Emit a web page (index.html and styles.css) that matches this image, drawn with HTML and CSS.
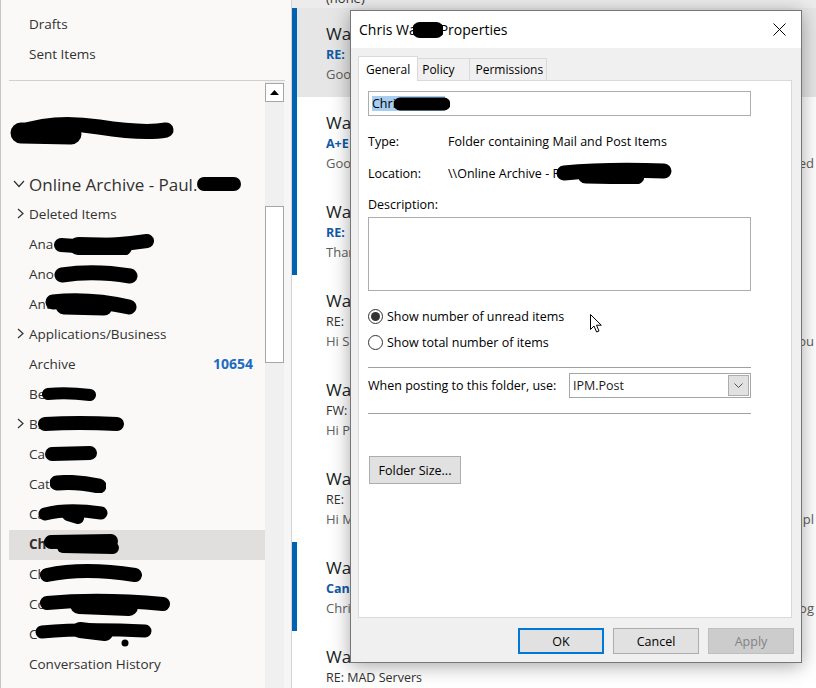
FILE: index.html
```html
<!DOCTYPE html>
<html lang="en">
<head>
  <meta charset="UTF-8" />
  <title>Chris W Properties</title>
  <link rel="stylesheet" href="styles.css">
</head>
<body>
  <div class="app">
    <nav class="folders">
      <div class="favorites">
        <div class="folder">Drafts</div>
        <div class="folder">Sent Items</div>
      </div>
      <div class="tree">
        <div class="tree-list">
          <div class="account-row">
            <svg class="blot" width="168" height="34"><path d="M12 21 Q 45 9 90 16 T 157 19" stroke-width="15"/><path d="M12 22 L 62 23" stroke-width="21"/></svg>
          </div>
          <div class="group-row">
            <svg class="chevron-down" width="12" height="8" viewBox="0 0 12 8"><path d="M1 1 L6 6.5 L11 1"/></svg>
            Online Archive - Paul.<svg class="blot blot-gap" width="44" height="16"><path d="M7 8 L37 8" stroke-width="14"/></svg>
          </div>
          <div class="folder"><span class="twisty"><svg width="7" height="11" viewBox="0 0 7 11"><path d="M1 1 L6 5.5 L1 10"/></svg></span>Deleted Items</div>
          <div class="folder"><span class="twisty"></span>Ana<svg class="blot blot-gap" width="102" height="22"><path d="M8 12 Q 45 15 94 8" stroke-width="14"/><path d="M25 13 L70 14" stroke-width="18"/></svg></div>
          <div class="folder"><span class="twisty"></span>Ano<svg class="blot blot-gap" width="84" height="20"><path d="M8 11 Q 40 6 76 12" stroke-width="15"/></svg></div>
          <div class="folder"><span class="twisty"></span>Ant<svg class="blot blot-tuck" width="94" height="24"><path d="M9 10 Q 45 6 85 15" stroke-width="15"/><path d="M20 14 L60 15" stroke-width="17"/></svg></div>
          <div class="folder"><span class="twisty"><svg width="7" height="11" viewBox="0 0 7 11"><path d="M1 1 L6 5.5 L1 10"/></svg></span>Applications/Business</div>
          <div class="folder"><span class="twisty"></span>Archive<span class="count">10654</span></div>
          <div class="folder"><span class="twisty"></span>Be<svg class="blot" width="54" height="16"><path d="M6 8 Q 25 6 48 9" stroke-width="12"/></svg></div>
          <div class="folder"><span class="twisty"><svg width="7" height="11" viewBox="0 0 7 11"><path d="M1 1 L6 5.5 L1 10"/></svg></span>BS<svg class="blot blot-tuck" width="86" height="18"><path d="M7 9 Q 40 7 79 9" stroke-width="14"/></svg></div>
          <div class="folder"><span class="twisty"></span>Ca<svg class="blot blot-gap" width="52" height="17"><path d="M7 9 L45 8" stroke-width="14"/></svg></div>
          <div class="folder"><span class="twisty"></span>Cat<svg class="blot blot-gap" width="56" height="18"><path d="M7 8 Q 26 6 49 11" stroke-width="15"/></svg></div>
          <div class="folder"><span class="twisty"></span>Ca<svg class="blot blot-tuck" width="70" height="20"><path d="M7 10 Q 30 4 63 9" stroke-width="13"/><path d="M30 11 L40 14" stroke-width="12"/></svg></div>
          <div class="folder selected"><span class="twisty"></span>Ch<svg class="blot" width="78" height="24"><path d="M8 10 L68 9" stroke-width="14"/><path d="M20 15 L70 16" stroke-width="12"/></svg></div>
          <div class="folder"><span class="twisty"></span>Ch<svg class="blot blot-tuck" width="104" height="20"><path d="M8 11 Q 45 3 96 11" stroke-width="14"/></svg></div>
          <div class="folder"><span class="twisty"></span>Co<svg class="blot blot-tuck" width="132" height="24"><path d="M8 11 Q 60 6 124 12" stroke-width="14"/><path d="M40 13 L90 15" stroke-width="18"/></svg></div>
          <div class="folder"><span class="twisty"></span>C<svg class="blot" width="118" height="26"><path d="M7 11 Q 50 7 110 10" stroke-width="13"/><path d="M45 9 L70 12" stroke-width="16"/><circle cx="90" cy="22" r="3.5"/></svg></div>
          <div class="folder"><span class="twisty"></span>Conversation History</div>
        </div>
        <div class="scrollbar">
          <div class="scroll-up"><svg width="9" height="5" viewBox="0 0 9 5"><path d="M0 5 L4.5 0 L9 5 Z"/></svg></div>
          <div class="scroll-thumb"></div>
        </div>
        <div class="gutter"></div>
      </div>
    </nav>

    <section class="mail-list">
      <div class="mail-none"><span>(none)</span></div>
      <div class="mail-item unread selected">
        <div class="mail-from">Wa</div>
        <div class="mail-subject">RE:</div>
        <div class="mail-preview"><span class="preview-text">Goo</span></div>
      </div>
      <div class="mail-item unread">
        <div class="mail-from">Wa</div>
        <div class="mail-subject">A+E</div>
        <div class="mail-preview"><span class="preview-text">Goo</span><span class="tail">ed</span></div>
      </div>
      <div class="mail-item unread">
        <div class="mail-from">Wa</div>
        <div class="mail-subject">RE:</div>
        <div class="mail-preview"><span class="preview-text">Thar</span></div>
      </div>
      <div class="mail-item">
        <div class="mail-from">Wa</div>
        <div class="mail-subject">RE:</div>
        <div class="mail-preview"><span class="preview-text">Hi S</span><span class="tail">ou</span></div>
      </div>
      <div class="mail-item">
        <div class="mail-from">Wa</div>
        <div class="mail-subject">FW:</div>
        <div class="mail-preview"><span class="preview-text">Hi P</span></div>
      </div>
      <div class="mail-item">
        <div class="mail-from">Wa</div>
        <div class="mail-subject">RE:</div>
        <div class="mail-preview"><span class="preview-text">Hi M</span><span class="tail">pl</span></div>
      </div>
      <div class="mail-item unread">
        <div class="mail-from">Wa</div>
        <div class="mail-subject">Can</div>
        <div class="mail-preview"><span class="preview-text">Chri</span><span class="tail">og</span></div>
      </div>
      <div class="mail-item">
        <div class="mail-from">Wa</div>
        <div class="mail-subject">RE: MAD Servers</div>
      </div>
    </section>
  </div>

  <div class="dialog">
    <div class="dialog-title">
      <span>Chris Wa<svg class="blot blot-title" width="30" height="20"><path d="M7 10 L23 10" stroke-width="16"/></svg>Properties</span>
      <svg class="close" width="13" height="13" viewBox="0 0 13 13"><path d="M0.5 0.5 L12.5 12.5 M12.5 0.5 L0.5 12.5"/></svg>
    </div>
    <div class="dialog-body">
      <div class="tabs">
        <div class="tab active">General</div>
        <div class="tab tab-policy">Policy</div>
        <div class="tab tab-perm">Permissions</div>
      </div>
      <div class="tab-panel">
        <div class="name-field"><span class="highlight">Chri<svg class="blot blot-name" width="56" height="18"><path d="M6 9 L50 9" stroke-width="13"/></svg></span></div>
        <div class="prop-row"><span class="prop-label">Type:</span><span>Folder containing Mail and Post Items</span></div>
        <div class="prop-row"><span class="prop-label">Location:</span><span>\\Online Archive - P<svg class="blot blot-loc" width="116" height="22"><path d="M8 11 Q 50 7 108 9" stroke-width="15"/><path d="M30 13 L80 14" stroke-width="17"/></svg></span></div>
        <div class="desc-label">Description:</div>
        <div class="desc-box"></div>
        <div class="radio first"><span class="radio-dot checked"></span>Show number of unread items</div>
        <div class="radio"><span class="radio-dot"></span>Show total number of items</div>
        <div class="sep"></div>
        <div class="post-row">
          <span>When posting to this folder, use:</span>
          <div class="select">
            <span>IPM.Post</span>
            <span class="select-btn"><svg width="9" height="5" viewBox="0 0 9 5"><path d="M0.5 0.5 L4.5 4.5 L8.5 0.5"/></svg></span>
          </div>
        </div>
        <div class="sep sep-lower"></div>
        <button class="btn folder-size">Folder Size...</button>
      </div>
      <div class="dialog-buttons">
        <button class="btn btn-default">OK</button>
        <button class="btn">Cancel</button>
        <button class="btn" disabled>Apply</button>
      </div>
    </div>
  </div>

  <svg class="cursor" width="13" height="20" viewBox="0 0 13 20"><path d="M0.5 0.5 L0.5 15.5 L4 12 L6.6 18 L9 17 L6.5 11.2 L11.3 11.2 Z"/></svg>
</body>
</html>
```

FILE: styles.css
```css
* {
  box-sizing: border-box;
}
html, body {
  margin: 0;
  padding: 0;
  height: 100%;
  overflow: hidden;
}
body {
  position: relative;
  background: #fff;
  font-family: "Open Sans", "Noto Sans", sans-serif;
  color: #323130;
}
.app {
  display: flex;
  height: 688px;
}

/* folder pane */
.folders {
  flex: none;
  width: 292px;
  display: flex;
  flex-direction: column;
  background: #faf9f8;
  border-left: 1px solid #c8c6c4;
  border-right: 1px solid #d6d4d2;
  font-size: 13.5px;
}
.favorites {
  height: 81px;
  margin: 0 6px 0 8px;
  padding-top: 10px;
  border-bottom: 1px solid #d2d0ce;
}
.folder {
  display: flex;
  align-items: center;
  height: 30px;
  padding-left: 20px;
  padding-bottom: 3px;
  white-space: nowrap;
}
.tree .folder {
  padding-left: 8px;
  padding-right: 12px;
}
.twisty {
  flex: none;
  width: 12px;
  display: flex;
  align-items: center;
}
.twisty svg path,
.chevron-down path {
  fill: none;
  stroke: #323130;
  stroke-width: 1.2;
}
.folder.selected {
  background: #e1dfdd;
  font-weight: 700;
}
.count {
  margin-left: auto;
  color: #1f6bbf;
  font-weight: 700;
  font-size: 14px;
}
.tree {
  flex: 1;
  display: flex;
  min-height: 0;
}
.tree-list {
  flex: none;
  width: 256px;
  margin-left: 8px;
}
.account-row {
  height: 87px;
  padding: 30px 0 0 3px;
}
.group-row {
  display: flex;
  align-items: center;
  height: 32px;
  padding-left: 4px;
  font-size: 17px;
  white-space: nowrap;
}
.chevron-down {
  margin-right: 4px;
}
.blot {
  flex: none;
  margin-left: -3px;
}
.blot path {
  fill: none;
  stroke: #000;
  stroke-linecap: round;
  stroke-linejoin: round;
}
.blot circle {
  fill: #000;
}
.blot-gap {
  margin-left: 0;
}
.blot-tuck {
  margin-left: -7px;
}
.scrollbar {
  flex: none;
  width: 19px;
  background: #f0f0f0;
  padding-top: 2px;
}
.scroll-up {
  height: 19px;
  border: 1px solid #a6a6a6;
  background: #fff;
  display: flex;
  align-items: center;
  justify-content: center;
}
.scroll-up path {
  fill: #000;
}
.scroll-thumb {
  height: 157px;
  margin-top: 104px;
  border: 1px solid #a6a6a6;
  background: #fff;
}
.gutter {
  flex: 1;
  background: #f6f6f6;
}

/* message list */
.mail-list {
  flex: 1;
  overflow: hidden;
  background: #fff;
}
.mail-none {
  height: 8px;
  overflow: hidden;
  background: #ececec;
  padding-left: 34px;
  font-size: 13px;
  line-height: 14px;
}
.mail-none span {
  display: block;
  margin-top: -9px;
  color: #323130;
}
.mail-item {
  height: 89px;
  padding: 15px 0 0 29px;
  border-left: 5px solid transparent;
  overflow: hidden;
  white-space: nowrap;
}
.mail-item.unread {
  border-left-color: #0063b1;
}
.mail-item.selected {
  background: #e6e6e6;
}
.mail-from {
  font-size: 17px;
  line-height: 22px;
  color: #201f1e;
}
.mail-subject {
  font-size: 12.5px;
  line-height: 20px;
  color: #323130;
}
.unread .mail-subject {
  color: #0f5ba7;
  font-weight: 700;
}
.mail-preview {
  display: flex;
  justify-content: space-between;
  font-size: 13px;
  line-height: 18px;
  color: #605e5c;
}
.preview-text {
  flex: 1;
  min-width: 0;
  overflow: hidden;
}
.tail {
  flex: none;
  padding-right: 2px;
}

/* properties dialog */
.dialog {
  position: absolute;
  left: 350px;
  top: 10px;
  width: 452px;
  height: 653px;
  display: flex;
  flex-direction: column;
  background: #f0f0f0;
  border: 1px solid #777;
  box-shadow: 0 3px 18px rgba(0, 0, 0, 0.35);
  font-size: 12.5px;
  color: #000;
}
.dialog-title {
  flex: none;
  height: 37px;
  display: flex;
  align-items: center;
  justify-content: space-between;
  padding: 0 15px 0 8px;
  background: #fff;
  font-size: 14px;
}
.dialog-title > span {
  display: flex;
  align-items: center;
}
.blot-title {
  margin: 0 -3px 0 -4px;
}
.close path {
  fill: none;
  stroke: #000;
  stroke-width: 1;
}
.dialog-body {
  flex: 1;
  display: flex;
  flex-direction: column;
  padding: 8px 9px 8px 7px;
}
.tabs {
  display: flex;
  align-items: flex-end;
  height: 24px;
  font-size: 12px;
}
.tab {
  height: 22px;
  line-height: 21px;
  padding: 0 8px;
  border: 1px solid #d9d9d9;
  border-bottom: 0;
  background: #f0f0f0;
  margin-left: -1px;
}
.tab.active {
  position: relative;
  z-index: 1;
  height: 25px;
  line-height: 26px;
  padding: 0 7px;
  margin-left: 0;
  margin-bottom: -1px;
  background: #fff;
}
.tab-policy {
  padding: 0 15px 0 4px;
}
.tab-perm {
  padding: 0 3px 0 5px;
}
.tab-panel {
  flex: 1;
  display: flex;
  flex-direction: column;
  align-items: flex-start;
  background: #fff;
  border: 1px solid #d9d9d9;
  padding: 0 40px 0 9px;
}
.tab-panel > div {
  align-self: stretch;
}
.name-field {
  height: 25px;
  margin-top: 10px;
  border: 1px solid #adadad;
  padding-left: 3px;
  display: flex;
  align-items: center;
}
.highlight {
  display: flex;
  align-items: center;
  height: 15px;
  width: 73px;
  background: #a7cdf0;
}
.blot-name {
  margin-left: -2px;
}
.prop-row {
  display: flex;
  align-items: center;
  height: 32px;
}
.name-field + .prop-row {
  margin-top: 9px;
}
.prop-row > span:last-child {
  display: flex;
  align-items: center;
  white-space: nowrap;
}
.prop-label {
  flex: none;
  width: 80px;
}
.blot-loc {
  margin-left: -4px;
}
.desc-label {
  margin-top: 7px;
  line-height: 18px;
}
.desc-box {
  height: 74px;
  margin-top: 3px;
  border: 1px solid #adadad;
}
.radio {
  display: flex;
  align-items: center;
  height: 22px;
  margin-top: 4px;
  white-space: nowrap;
}
.radio.first {
  margin-top: 14px;
}
.radio-dot {
  position: relative;
  flex: none;
  width: 15px;
  height: 15px;
  margin-right: 4px;
  border: 1px solid #333;
  border-radius: 50%;
  background: #fff;
}
.radio-dot.checked::after {
  content: "";
  position: absolute;
  left: 2px;
  top: 2px;
  width: 9px;
  height: 9px;
  border-radius: 50%;
  background: #333;
}
.sep {
  height: 1px;
  margin-top: 14px;
  background: #a0a0a0;
}
.sep-lower {
  margin-top: 15px;
}
.post-row {
  display: flex;
  align-items: center;
  justify-content: space-between;
  margin-top: 5px;
}
.select {
  width: 182px;
  height: 25px;
  display: flex;
  align-items: center;
  justify-content: space-between;
  border: 1px solid #a6a6a6;
  padding: 1px 1px 1px 3px;
  color: #1a1a1a;
}
.select-btn {
  width: 21px;
  height: 21px;
  display: flex;
  align-items: center;
  justify-content: center;
  background: #e1e1e1;
  border: 1px solid #adadad;
}
.select-btn path {
  fill: none;
  stroke: #555;
  stroke-width: 1;
}
.btn {
  font-family: inherit;
  font-size: 12.5px;
  color: #000;
  height: 26px;
  padding: 0;
  background: #e1e1e1;
  border: 1px solid #adadad;
}
.folder-size {
  width: 92px;
  height: 28px;
  margin: 42px 0 0 1px;
}
.dialog-buttons {
  display: flex;
  justify-content: flex-end;
  gap: 9px;
  margin: 10px -2px 0 0;
}
.dialog-buttons .btn {
  width: 86px;
}
.btn-default {
  border: 2px solid #0078d7;
}
.btn:disabled {
  background: #cccccc;
  border-color: #bfbfbf;
  color: #838383;
}
.cursor {
  position: absolute;
  left: 590px;
  top: 314px;
}
.cursor path {
  fill: #fff;
  stroke: #000;
  stroke-width: 1;
}
```
